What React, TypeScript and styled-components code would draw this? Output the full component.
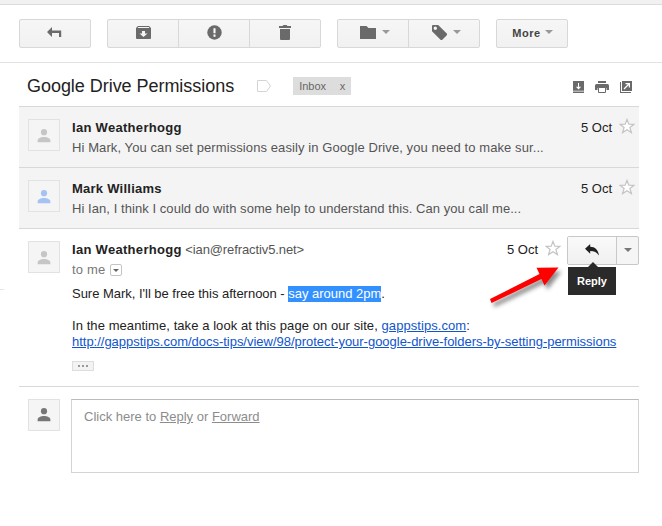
import { ReactNode } from "react";
import styled, { createGlobalStyle } from "styled-components";

const colors = {
  text: "#222",
  muted: "#555",
  faint: "#777",
  icon: "#6a6a6a",
  line: "#d8d8d8",
  link: "#15c",
  rowBg: "#f4f4f4",
};

const GlobalStyle = createGlobalStyle`
  body {
    margin: 0;
    background: #fff;
    color: ${colors.text};
    font: 13px/16px "Liberation Sans", Arial, sans-serif;
  }
  * {
    box-sizing: border-box;
  }
  svg {
    display: block;
    flex: none;
  }
`;

const Page = styled.div`
  position: relative;
  width: 662px;
  height: 526px;
  overflow: hidden;
`;

const TopStrip = styled.div`
  height: 5px;
  background: #f1f1f1;
  border-bottom: 1px solid #dcdcdc;
`;

const Toolbar = styled.div`
  display: flex;
  gap: 16px;
  height: 58px;
  padding: 14px 19px 0;
  border-bottom: 1px solid #e2e2e2;
`;

const ButtonGroup = styled.div<{ $width: number }>`
  display: flex;
  flex: none;
  width: ${(props) => props.$width}px;
  height: 29px;
  border: 1px solid ${colors.line};
  border-radius: 2px;
  background: linear-gradient(#f6f6f6, #f1f1f1);
`;

const ToolButton = styled.button<{ $indent?: number }>`
  display: flex;
  flex: 1 1 0;
  align-items: center;
  justify-content: center;
  gap: 6px;
  padding: 0 0 0 ${(props) => props.$indent ?? 0}px;
  border: none;
  background: none;
  color: #444;
  font: bold 11px/27px "Liberation Sans", Arial, sans-serif;
  letter-spacing: 0.5px;
  &:not(:first-child) {
    border-left: 1px solid ${colors.line};
  }
  svg {
    margin-top: -2px;
  }
`;

const Caret = styled.span<{ $color?: string; $size?: number }>`
  border: solid transparent;
  border-width: ${(props) => props.$size ?? 4}px;
  border-bottom-width: 0;
  border-top-color: ${(props) => props.$color ?? "#999"};
`;

const ToolCaret = styled(Caret)`
  margin-top: -3px;
`;

const MoreCaret = styled(ToolCaret)`
  margin-left: -2px;
`;

const SubjectRow = styled.header`
  display: flex;
  align-items: center;
  height: 43px;
  margin: 0 24px 0 27px;
  padding-top: 3px;
`;

const Subject = styled.h1`
  margin: 0 23px 0 0;
  font-size: 18px;
  font-weight: normal;
  line-height: 24px;
  letter-spacing: -0.04px;
  white-space: nowrap;
`;

const InboxChip = styled.span`
  display: flex;
  justify-content: space-between;
  width: 58px;
  height: 18px;
  margin-left: 22px;
  padding: 0 6px;
  background: #ddd;
  color: #666;
  font-size: 11px;
  line-height: 19px;
`;

const SubjectActions = styled.div`
  display: flex;
  align-items: center;
  gap: 11px;
  margin-left: auto;
  padding: 2px 6px 0 0;
`;

const AvatarBox = styled.div`
  display: flex;
  flex: none;
  align-items: center;
  justify-content: center;
  width: 32px;
  height: 32px;
  border: 1px solid #e2e2e2;
  background: #f5f5f5;
`;

const Message = styled.article<{ $collapsed?: boolean }>`
  display: flex;
  position: relative;
  height: ${(props) => (props.$collapsed ? 61 : 158)}px;
  margin: 0 23px 0 19px;
  padding: 12px 0 0 9px;
  border-top: 1px solid ${colors.line};
  background: ${(props) => (props.$collapsed ? colors.rowBg : "#fff")};
  ${AvatarBox} {
    padding-top: 2px;
  }
`;

const Content = styled.div`
  flex: 1;
  min-width: 0;
  margin-left: 12px;
  padding-top: 1px;
`;

const Line = styled.div<{ $spacing?: number; $top?: number; $color?: string }>`
  height: 16px;
  margin-top: ${(props) => props.$top ?? 0}px;
  color: ${(props) => props.$color ?? colors.text};
  letter-spacing: ${(props) => props.$spacing ?? 0}px;
  white-space: nowrap;
`;

const Sender = styled.b<{ $spacing?: number }>`
  color: ${colors.text};
  letter-spacing: ${(props) => props.$spacing ?? 0.3}px;
`;

const Meta = styled.div<{ $right: number }>`
  display: flex;
  position: absolute;
  top: 11px;
  right: ${(props) => props.$right}px;
  gap: 7px;
  line-height: 19px;
`;

const DetailsToggle = styled.span`
  display: inline-flex;
  align-items: center;
  justify-content: center;
  width: 12px;
  height: 12px;
  margin: 2px 0 0 4px;
  border: 1px solid #c4c4c4;
  border-radius: 2px;
  vertical-align: top;
`;

const Selected = styled.span`
  display: inline-block;
  height: 16px;
  background: #3390ff;
  color: #fff;
`;

const Link = styled.a`
  color: ${colors.link};
  text-decoration: underline;
`;

const Ellipsis = styled.div`
  display: flex;
  align-items: center;
  justify-content: center;
  gap: 2px;
  width: 22px;
  height: 10px;
  margin-top: 11px;
  border: 1px solid #ddd;
  background: #f3f3f3;
  i {
    width: 2px;
    height: 2px;
    background: #999;
  }
`;

const ReplyGroup = styled.div`
  display: flex;
  position: absolute;
  top: 7px;
  right: 0;
  width: 72px;
  height: 29px;
  border: 1px solid #c8c8c8;
  border-radius: 2px;
  background: #f5f5f5;
`;

const ReplyMain = styled.div`
  display: flex;
  align-items: center;
  justify-content: center;
  width: 49px;
  padding-bottom: 2px;
  border-right: 1px solid #c8c8c8;
  background: linear-gradient(#fafafa, #f0f0f0);
`;

const ReplyMore = styled.div`
  display: flex;
  flex: 1;
  align-items: center;
  justify-content: center;
  padding-bottom: 2px;
`;

const Tooltip = styled.div`
  position: absolute;
  top: 30px;
  left: 0;
  width: 48px;
  height: 28px;
  background: #2a2a2a;
  color: #fff;
  font-size: 11px;
  font-weight: bold;
  line-height: 28px;
  text-align: center;
  &:before {
    content: "";
    position: absolute;
    top: -5px;
    left: 20px;
    border: 5px solid transparent;
    border-top: none;
    border-bottom-color: #2a2a2a;
  }
`;

const Composer = styled.section`
  display: flex;
  margin: 0 23px 0 19px;
  padding: 12px 0 0 9px;
  border-top: 1px solid ${colors.line};
`;

const ReplyBox = styled.div`
  flex: 1;
  height: 74px;
  margin-left: 11px;
  padding: 9px 12px;
  border: 1px solid #d4d4d4;
  border-top-color: #bbb;
  color: #8c8c8c;
  span {
    text-decoration: underline;
  }
`;

const Pointer = styled.svg`
  position: absolute;
  top: 258px;
  left: 480px;
  path {
    filter: drop-shadow(3px 4px 2px rgba(0, 0, 0, 0.45));
  }
`;

const NavDivider = styled.div`
  position: absolute;
  top: 289px;
  left: 0;
  width: 4px;
  height: 1px;
  background: #e4e4e4;
`;

const Avatar = ({ color }: { color: string }) => (
  <AvatarBox>
    <svg width="14" height="14" viewBox="0 0 14 14" fill={color}>
      <circle cx="7" cy="3.2" r="3.1" />
      <path d="M.6 13.3v-1.6c0-2.4 3.4-3.6 6.4-3.6s6.4 1.2 6.4 3.6v1.6z" />
    </svg>
  </AvatarBox>
);

const Star = () => (
  <svg width="16" height="16" viewBox="0 0 16 16" fill="#fff" stroke="#c4c4c4" strokeWidth="1.2">
    <path d="M8 1.4l1.8 4.8 5.2.1-4.1 3.2 1.5 5.1L8 11.7l-4.4 2.9 1.5-5.1L1 6.3l5.2-.1z" />
  </svg>
);

const Icon = ({ w, h, children }: { w: number; h: number; children: ReactNode }) => (
  <svg width={w} height={h} viewBox={`0 0 ${w} ${h}`} fill={colors.icon}>
    {children}
  </svg>
);

const App = () => (
  <>
    <GlobalStyle />
    <Page>
      <TopStrip />
      <Toolbar>
        <ButtonGroup $width={72}>
          <ToolButton>
            <Icon w={16} h={11}>
              <path d="M0 5L5 0v3.6h9.2V10H12V6H5v4z" />
            </Icon>
          </ToolButton>
        </ButtonGroup>
        <ButtonGroup $width={214}>
          <ToolButton>
            <Icon w={15} h={13}>
              <path
                fillRule="evenodd"
                d="M2 0h11l2 2v10q0 1-1 1H1q-1 0-1-1V2zM1.6 2h11.8l-.7-1H2.3zM6 5v2.5H3.5l4 3.5 4-3.5H9V5z"
              />
            </Icon>
          </ToolButton>
          <ToolButton>
            <Icon w={15} h={15}>
              <circle cx="7.5" cy="7.5" r="7.2" />
              <path fill="#fff" d="M6.5 3.2h2v5h-2zM6.5 9.6h2v2.1h-2z" />
            </Icon>
          </ToolButton>
          <ToolButton>
            <Icon w={12} h={15}>
              <path d="M0 1h3.5l1-1h3l1 1H12v2H0zM1 4h10v10q0 1-1 1H2q-1 0-1-1z" />
            </Icon>
          </ToolButton>
        </ButtonGroup>
        <ButtonGroup $width={143}>
          <ToolButton $indent={4}>
            <Icon w={16} h={13}>
              <path d="M0 0h6.5l2 2H16v11H0z" />
            </Icon>
            <ToolCaret />
          </ToolButton>
          <ToolButton $indent={4}>
            <Icon w={15} h={15}>
              <path
                fillRule="evenodd"
                d="M0 1q0-1 1-1h5.2L15 8.8q.5.6 0 1.2L10 15q-.6.4-1.2 0L0 6.2zM3.3 1.6a1.7 1.7 0 100 3.4 1.7 1.7 0 000-3.4z"
              />
            </Icon>
            <ToolCaret />
          </ToolButton>
        </ButtonGroup>
        <ButtonGroup $width={72}>
          <ToolButton $indent={1}>
            More <MoreCaret />
          </ToolButton>
        </ButtonGroup>
      </Toolbar>

      <SubjectRow>
        <Subject>Google Drive Permissions</Subject>
        <svg width="14" height="12" viewBox="0 0 14 12" fill="none" stroke="#d4d4d4">
          <path d="M.5.5h9l4 5.5-4 5.5h-9z" />
        </svg>
        <InboxChip>
          <span>Inbox</span>
          <span>x</span>
        </InboxChip>
        <SubjectActions>
          <Icon w={11} h={12}>
            <path d="M0 0h11v12H0z" />
            <path fill="#fff" d="M5 2h1v3.8h2.2L5.5 8.5 2.8 5.8H5zM0 9.8h11v.7H0z" />
          </Icon>
          <Icon w={14} h={12}>
            <path d="M3 0h8v2H3zM1.5 3h11Q14 3 14 4.5V9h-2.5V7h-9v2H0V4.5Q0 3 1.5 3z" />
            <path fill="#fff" stroke={colors.icon} d="M3.5 6.5h7v5h-7z" />
          </Icon>
          <Icon w={12} h={12}>
            <path d="M0 1h1v10h10v1H0zM2 0h10v10H2z" />
            <path fill="none" stroke="#fff" strokeWidth="1.2" d="M4 8l5-5M5.5 2.6h3.9v3.9" />
          </Icon>
        </SubjectActions>
      </SubjectRow>

      <Message $collapsed>
        <Avatar color="#c6c6c6" />
        <Content>
          <Line>
            <Sender>Ian Weatherhogg</Sender>
          </Line>
          <Line $top={4} $color={colors.muted} $spacing={0.09}>
            Hi Mark, You can set permissions easily in Google Drive, you need to make sur...
          </Line>
        </Content>
        <Meta $right={4}>
          5 Oct <Star />
        </Meta>
      </Message>
      <Message $collapsed>
        <Avatar color="#a4c2f4" />
        <Content>
          <Line>
            <Sender $spacing={0.25}>Mark Williams</Sender>
          </Line>
          <Line $top={4} $color={colors.muted} $spacing={0.06}>
            Hi Ian, I think I could do with some help to understand this. Can you call me...
          </Line>
        </Content>
        <Meta $right={4}>
          5 Oct <Star />
        </Meta>
      </Message>
      <Message>
        <Avatar color="#c6c6c6" />
        <Content>
          <Line $color={colors.muted} $spacing={-0.1}>
            <Sender>Ian Weatherhogg</Sender> &lt;ian@refractiv5.net&gt;
          </Line>
          <Line $top={4} $color={colors.faint} $spacing={0.2}>
            to me
            <DetailsToggle>
              <Caret $size={3} $color="#666" />
            </DetailsToggle>
          </Line>
          <Line $top={8} $spacing={-0.02}>
            Sure Mark, I'll be free this afternoon - <Selected>say around 2pm</Selected>.
          </Line>
          <Line $top={16} $spacing={0.07}>
            In the meantime, take a look at this page on our site, <Link>gappstips.com</Link>:
          </Line>
          <Line $spacing={-0.02}>
            <Link>
              http://gappstips.com/docs-tips/view/98/protect-your-google-drive-folders-by-setting-permissions
            </Link>
          </Line>
          <Ellipsis>
            <i />
            <i />
            <i />
          </Ellipsis>
        </Content>
        <Meta $right={78}>
          5 Oct <Star />
        </Meta>
        <ReplyGroup>
          <ReplyMain>
            <svg width="14" height="12" viewBox="0 0 14 12" fill="#222">
              <path d="M0 4.7L5.2 0v2.8C10 3 13.2 5.6 14 11.5 11.8 8.2 9.3 7 5.2 7v2.7z" />
            </svg>
          </ReplyMain>
          <ReplyMore>
            <Caret $color="#777" />
          </ReplyMore>
          <Tooltip>Reply</Tooltip>
        </ReplyGroup>
      </Message>

      <Composer>
        <Avatar color="#777" />
        <ReplyBox>
          Click here to <span>Reply</span> or <span>Forward</span>
        </ReplyBox>
      </Composer>

      <Pointer width="86" height="56" viewBox="0 0 86 56">
        <path d="M10 41L59.5 16 56.5 9.8 78.5 9.5 64.5 27.5 61.5 21 11.5 45z" fill="#f00" />
      </Pointer>
      <NavDivider />
    </Page>
  </>
);

export default App;
